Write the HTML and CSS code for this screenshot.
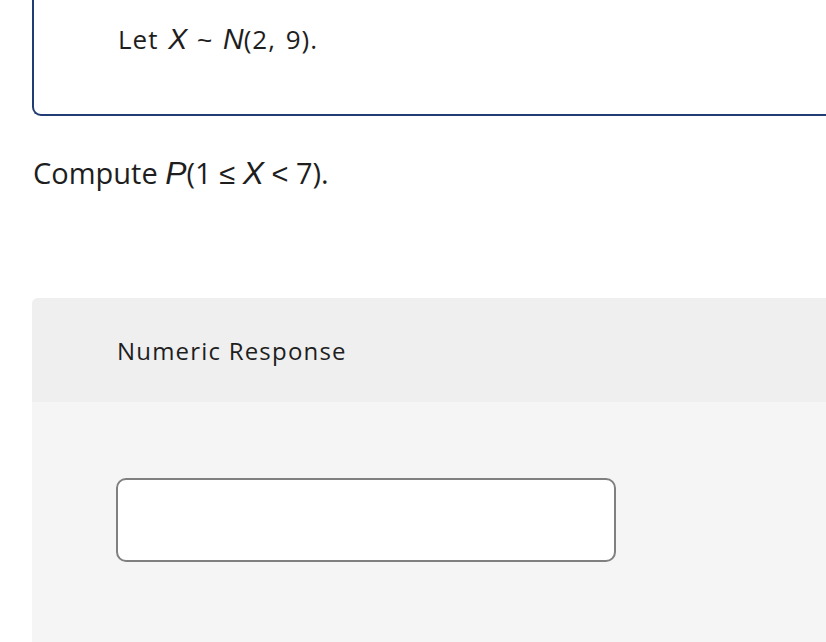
FILE: index.html
```html
<!DOCTYPE html>
<html>
<head>
<meta charset="utf-8">
<link rel="stylesheet" href="styles.css">
</head>
<body>
<div class="stem">
  <p class="given">Let <span class="m">X</span> <span class="op">~</span> <span class="m">N</span>(2, 9).</p>
</div>
<p class="question">Compute <span class="m">P</span>(1 <span class="op">≤</span> <span class="m">X</span> <span class="op">&lt;</span> 7).</p>
<div class="panel">
  <div class="panel-head">Numeric Response</div>
  <div class="panel-body">
    <input class="answer" type="text">
  </div>
</div>
</body>
</html>
```
FILE: styles.css
```css
html, body {
  margin: 0;
  padding: 0;
  background: #ffffff;
  overflow: hidden;
}
body {
  font-family: "Open Sans", "Liberation Sans", sans-serif;
  color: #1e1e1e;
}
.stem {
  margin: -30px 0 0 32px;
  border: 2px solid #213d73;
  border-right: none;
  border-radius: 0 0 0 9px;
  padding: 51px 0 58px 84px;
}
.given {
  margin: 0;
  font-size: 26px;
  line-height: 32px;
  letter-spacing: 1px;
  word-spacing: 2px;
}
.m {
  font-family: "Liberation Sans", Arial, sans-serif;
  font-style: italic;
  font-size: 1.1em;
  letter-spacing: 0;
}
.op {
  font-family: "Liberation Sans", Arial, sans-serif;
}
.question {
  margin: 39px 0 0 33px;
  font-size: 29px;
  line-height: 36px;
}
.panel {
  margin: 106px 0 0 32px;
  border-radius: 6px 0 0 0;
  overflow: hidden;
  background: #f5f5f5;
}
.panel-head {
  background: #efefef;
  padding: 37px 0 35px 85px;
  font-size: 24px;
  line-height: 32px;
  letter-spacing: 1.2px;
}
.panel-body {
  padding: 76px 0 120px 84px;
}
.answer {
  display: block;
  box-sizing: border-box;
  width: 500px;
  height: 84px;
  margin: 0;
  border: 2px solid #808080;
  border-radius: 10px;
  background: #ffffff;
  outline: none;
}
```
